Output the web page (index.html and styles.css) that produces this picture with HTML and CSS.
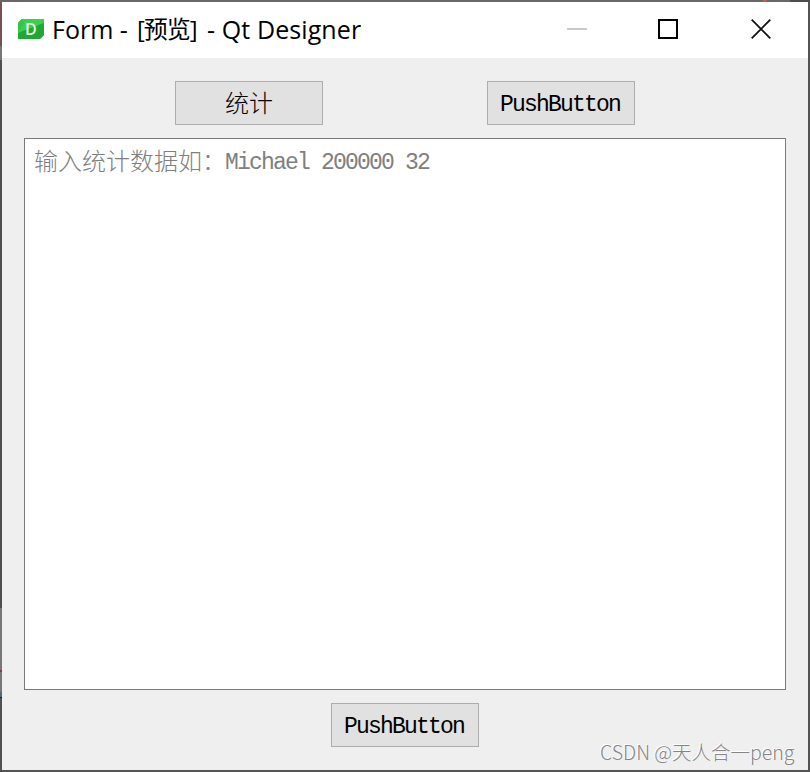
FILE: index.html
```html
<!DOCTYPE html>
<html lang="zh-CN">
<head>
  <meta charset="UTF-8">
  <title>Form - [预览] - Qt Designer</title>
  <link rel="stylesheet" href="styles.css">
</head>
<body>
  <div class="window">
    <div class="title-bar">
      <svg class="logo" width="26" height="20" viewBox="0 0 26 20">
        <path d="M4 0H26V16L22 20H0V4Z" fill="#2fbf46"/>
        <path d="M4 0H26V4L0 14V4Z" fill="#41cd52"/>
        <path d="M0 14L26 4V16L22 20H0Z" fill="#21a834"/>
        <path d="M0 4L4 0L6 4L0 14Z" fill="#35c348"/>
        <text class="logo-text" x="7" y="16">D</text>
      </svg>
      <div class="title">
        <span class="title-form">Form -</span>
        <span class="title-preview">[预览]</span>
        <span class="title-app">- Qt Designer</span>
      </div>
      <div class="controls">
        <svg width="20" height="20" viewBox="0 0 20 20">
          <path d="M0 10H20" stroke="#cacaca" stroke-width="2"/>
        </svg>
        <svg width="20" height="20" viewBox="0 0 20 20">
          <rect x="1" y="1" width="18" height="18" fill="none" stroke="#000" stroke-width="2"/>
        </svg>
        <svg width="20" height="20" viewBox="0 0 20 20">
          <path d="M.7 .7L19.3 19.3M19.3 .7L.7 19.3" stroke="#111" stroke-width="1.8"/>
        </svg>
      </div>
    </div>

    <div class="form">
      <div class="button-row">
        <button class="push-btn cjk">统计</button>
        <button class="push-btn">PushButton</button>
      </div>
      <div class="text-edit"><span class="hint-cjk">输入统计数据如：</span><span class="hint">Michael 200000 32</span></div>
      <div class="button-row bottom">
        <button class="push-btn">PushButton</button>
      </div>
    </div>
  </div>
  <div class="watermark">CSDN @天人合一peng</div>
</body>
</html>
```
FILE: styles.css
```css
* {
  box-sizing: border-box;
}

body {
  margin: 0;
  width: 810px;
  height: 772px;
  overflow: hidden;
  /* desktop showing along the window edge */
  background:
    linear-gradient(#b5605f, #b5605f) 763px 0 / 4px 2px no-repeat,
    linear-gradient(90deg, #696767 0 790px, #4d4d4d 790px) 0 0 / 810px 2px no-repeat,
    linear-gradient(#7b4f52 0 46px, #777 46px 60px, #4f4f4f 60px 608px, #777 608px 670px, #7c4045 670px 672px, #777 672px 692px, #536b78 692px 697px, #222 697px 698px, #505050 698px) 0 0 / 2px 772px no-repeat,
    #535353;
}

.window {
  display: flex;
  flex-direction: column;
  height: 772px;
  padding: 2px;
}

.title-bar {
  display: flex;
  align-items: center;
  height: 56px;
  padding: 0 37px 2px 16px;
  background-color: #fff;
}

.logo-text {
  font: 600 16px "Open Sans", sans-serif;
  fill: #e4f8e6;
}

.title {
  display: flex;
  align-items: center;
  margin-left: 8px;
  height: 34px;
  font: 25px/34px "Open Sans", "Noto Sans CJK SC", sans-serif;
  color: #000;
  white-space: nowrap;
}

.title-form {
  width: 85px;
}

.title-preview {
  width: 70px;
  font-size: 24px;
  letter-spacing: -1px;
}

.title-app {
  letter-spacing: 0.1px;
}

.controls {
  display: flex;
  margin-left: auto;
}

.controls svg {
  margin-left: 71px;
}

.controls svg:last-child {
  margin-left: 73px;
}

.form {
  display: flex;
  flex: 1;
  flex-direction: column;
  padding: 23px 22px;
  background-color: #efefef;
}

.button-row {
  display: flex;
  justify-content: center;
  gap: 164px;
  margin-bottom: 13px;
}

.button-row.bottom {
  margin: 13px 0 0;
}

.push-btn {
  width: 148px;
  height: 44px;
  padding: 4px 2px 0 0;
  border: 1px solid #adadad;
  background-color: #e1e1e1;
  color: #000;
  font: 23px "Liberation Mono", monospace;
  letter-spacing: -1.8px;
}

.push-btn.cjk {
  padding: 0 0 3px;
  font: 300 24px "Noto Sans CJK SC", sans-serif;
  letter-spacing: 0;
}

.text-edit {
  display: flex;
  height: 552px;
  padding: 4px 9px;
  border: 1px solid #7a7a7a;
  background-color: #fff;
  color: #808080;
  line-height: 34px;
}

.hint-cjk {
  font-family: "Noto Sans CJK SC", sans-serif;
  font-size: 24px;
  font-weight: 300;
}

.hint {
  padding-top: 3px;
  margin-left: -1px;
  font-family: "Liberation Mono", monospace;
  font-size: 23px;
  letter-spacing: -1.8px;
}

.watermark {
  position: absolute;
  left: 600px;
  top: 738px;
  font: 300 19.5px/28px "Noto Sans CJK SC", sans-serif;
  color: #858585;
  text-shadow: -1px -1px 0 #fff;
  white-space: nowrap;
}
```
